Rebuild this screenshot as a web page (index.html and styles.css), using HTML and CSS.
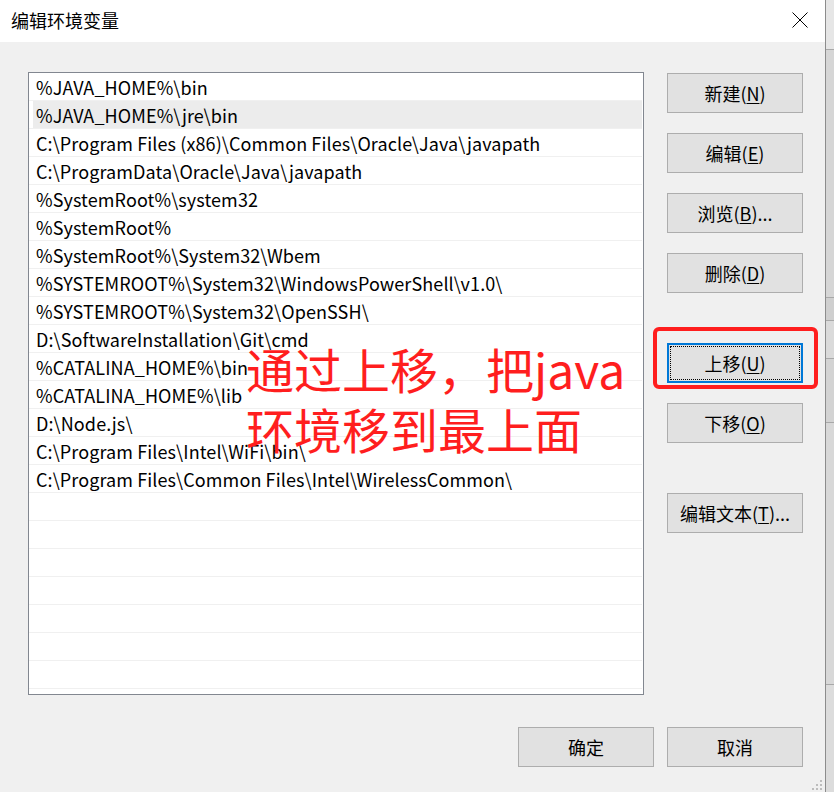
FILE: index.html
```html
<!DOCTYPE html>
<html lang="zh-CN">
<head>
<meta charset="utf-8">
<title>编辑环境变量</title>
<link rel="stylesheet" href="styles.css">
</head>
<body>
<div class="screen">
  <div class="dialog">
    <div class="titlebar">
      <span class="title">编辑环境变量</span>
      <svg class="close" width="16" height="16" viewBox="0 0 16 16"><path d="M0.5 0.5 L15.5 15.5 M15.5 0.5 L0.5 15.5" stroke="#000" stroke-width="1" fill="none"/></svg>
    </div>
    <div class="body">
      <div class="main">
        <div class="list">
          <div class="row">%JAVA_HOME%\bin</div>
          <div class="row selected">%JAVA_HOME%\jre\bin</div>
          <div class="row">C:\Program Files (x86)\Common Files\Oracle\Java\javapath</div>
          <div class="row">C:\ProgramData\Oracle\Java\javapath</div>
          <div class="row">%SystemRoot%\system32</div>
          <div class="row">%SystemRoot%</div>
          <div class="row">%SystemRoot%\System32\Wbem</div>
          <div class="row">%SYSTEMROOT%\System32\WindowsPowerShell\v1.0\</div>
          <div class="row">%SYSTEMROOT%\System32\OpenSSH\</div>
          <div class="row">D:\SoftwareInstallation\Git\cmd</div>
          <div class="row">%CATALINA_HOME%\bin</div>
          <div class="row">%CATALINA_HOME%\lib</div>
          <div class="row">D:\Node.js\</div>
          <div class="row">C:\Program Files\Intel\WiFi\bin\</div>
          <div class="row">C:\Program Files\Common Files\Intel\WirelessCommon\</div>
          <div class="row"></div>
          <div class="row"></div>
          <div class="row"></div>
          <div class="row"></div>
          <div class="row"></div>
          <div class="row"></div>
          <div class="row"></div>
        </div>
        <div class="side">
          <button class="btn">新建(<u>N</u>)</button>
          <button class="btn">编辑(<u>E</u>)</button>
          <button class="btn">浏览(<u>B</u>)...</button>
          <button class="btn">删除(<u>D</u>)</button>
          <button class="btn focused gap"><span class="focus-ring">上移(<u>U</u>)</span></button>
          <button class="btn">下移(<u>O</u>)</button>
          <button class="btn gap">编辑文本(<u>T</u>)...</button>
        </div>
      </div>
      <div class="footer">
        <button class="btn">确定</button>
        <button class="btn">取消</button>
      </div>
      <div class="grip">
        <i></i><i></i><i></i><i></i><i></i><i></i>
      </div>
    </div>
  </div>
  <div class="strip">
    <div class="s1"></div><div class="s2"></div><div class="s3"></div><div class="s4"></div><div class="s5"></div><div class="s6"></div>
  </div>
  <div class="annot-box"></div>
  <div class="annot-text">通过上移，把java<br>环境移到最上面</div>
</div>
</body>
</html>
```

FILE: styles.css
```css
* { box-sizing: border-box; }
html, body { margin: 0; padding: 0; }
body {
  width: 834px;
  height: 792px;
  overflow: hidden;
  font-family: "Noto Sans CJK SC", "Noto Sans", sans-serif;
}
.screen {
  position: relative;
  display: flex;
  width: 834px;
  height: 792px;
}
.dialog {
  width: 826px;
  height: 792px;
  border-right: 1px solid #8c8c8c;
  display: flex;
  flex-direction: column;
  background: #f0f0f0;
}
.titlebar {
  height: 42px;
  background: #fff;
  display: flex;
  align-items: center;
  justify-content: space-between;
  padding: 0 17px 3px 11px;
}
.title {
  font-size: 18px;
  color: #000;
}
.close { display: block; margin-top: 1px; }
.body {
  position: relative;
  flex: 1;
  padding: 30px 0 0 28px;
}
.main {
  display: flex;
  gap: 23px;
}
.list {
  width: 616px;
  height: 623px;
  border: 1px solid #828790;
  background: #fff;
  overflow: hidden;
  padding-right: 1px;
}
.row {
  height: 28px;
  line-height: 29px;
  border-bottom: 1px solid #f0f0f0;
  padding-left: 7px;
  font-size: 18px;
  color: #000;
  white-space: nowrap;
  letter-spacing: 0.1px;
}
.row.selected {
  background: linear-gradient(to right, #fff 4px, #ececec 4px);
}
.side {
  display: flex;
  flex-direction: column;
  gap: 20px;
  padding-top: 1px;
}
.btn {
  width: 136px;
  height: 40px;
  background: #e1e1e1;
  border: 1px solid #adadad;
  font-family: "Noto Sans CJK SC", "Noto Sans", sans-serif;
  font-size: 18px;
  color: #000;
  padding: 0;
  margin: 0;
  display: flex;
  align-items: center;
  justify-content: center;
}
.btn u { text-underline-offset: 2px; }
.btn.gap { margin-top: 30px; }
.btn.focused {
  border: 2px solid #0078d7;
  padding: 1px;
}
.focus-ring {
  width: 100%;
  height: 100%;
  border: 1px dotted #000;
  display: flex;
  align-items: center;
  justify-content: center;
}
.footer {
  display: flex;
  gap: 13px;
  margin-top: 32px;
  padding-left: 490px;
}
.grip {
  position: absolute;
  right: 3px;
  bottom: 2px;
  width: 12px;
  height: 12px;
}
.grip i {
  position: absolute;
  width: 2px;
  height: 2px;
  background: #bdbdbd;
}
.grip i:nth-child(1) { right: 0; bottom: 0; }
.grip i:nth-child(2) { right: 4px; bottom: 0; }
.grip i:nth-child(3) { right: 8px; bottom: 0; }
.grip i:nth-child(4) { right: 0; bottom: 4px; }
.grip i:nth-child(5) { right: 4px; bottom: 4px; }
.grip i:nth-child(6) { right: 0; bottom: 8px; }
.strip {
  flex: 1;
  height: 792px;
  background: #dcdcdc;
  display: flex;
  flex-direction: column;
}
.strip div { border-bottom: 1px solid #a8a8a8; }
.s1 { height: 50px; background: #e6e6e6; }
.s2 { height: 248px; background: #d6d6d6; }
.s3 { height: 23px; background: #cfcfcf; }
.s4 { height: 38px; background: #dadada; }
.s5 { height: 64px; background: #d3d3d3; }
.s6 { height: 262px; background: #d8d8d8; }
.annot-box {
  position: absolute;
  left: 653px;
  top: 327px;
  width: 165px;
  height: 62px;
  border: 4px solid #ff1e1e;
  border-radius: 6px;
}
.annot-text {
  position: absolute;
  left: 246px;
  top: 338px;
  font-size: 48px;
  line-height: 60px;
  color: #ff1e1e;
  font-family: "Noto Sans CJK SC", sans-serif;
}
```
